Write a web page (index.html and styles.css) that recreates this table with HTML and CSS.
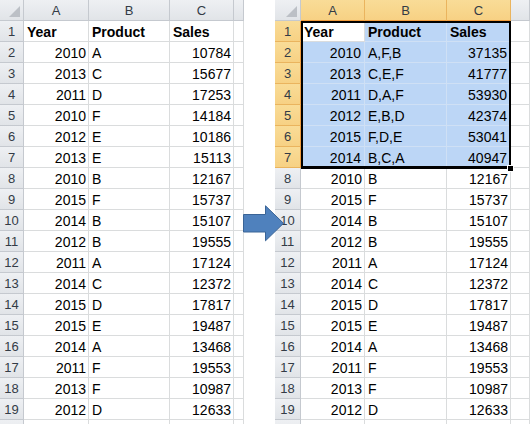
FILE: index.html
```html
<!DOCTYPE html>
<html>
<head>
<meta charset="utf-8">
<link rel="stylesheet" href="styles.css">
</head>
<body>
<div class="page">
  <div class="sheet sheet-left">
    <div class="hd corner"><span class="tri"></span></div><div class="hd col">A</div><div class="hd col">B</div><div class="hd col">C</div><div class="hd col"></div>
    <div class="hd rh">1</div><div class="c t b">Year</div><div class="c t b">Product</div><div class="c t b">Sales</div><div class="c"></div>
    <div class="hd rh">2</div><div class="c n">2010</div><div class="c t">A</div><div class="c n">10784</div><div class="c"></div>
    <div class="hd rh">3</div><div class="c n">2013</div><div class="c t">C</div><div class="c n">15677</div><div class="c"></div>
    <div class="hd rh">4</div><div class="c n">2011</div><div class="c t">D</div><div class="c n">17253</div><div class="c"></div>
    <div class="hd rh">5</div><div class="c n">2010</div><div class="c t">F</div><div class="c n">14184</div><div class="c"></div>
    <div class="hd rh">6</div><div class="c n">2012</div><div class="c t">E</div><div class="c n">10186</div><div class="c"></div>
    <div class="hd rh">7</div><div class="c n">2013</div><div class="c t">E</div><div class="c n">15113</div><div class="c"></div>
    <div class="hd rh">8</div><div class="c n">2010</div><div class="c t">B</div><div class="c n">12167</div><div class="c"></div>
    <div class="hd rh">9</div><div class="c n">2015</div><div class="c t">F</div><div class="c n">15737</div><div class="c"></div>
    <div class="hd rh">10</div><div class="c n">2014</div><div class="c t">B</div><div class="c n">15107</div><div class="c"></div>
    <div class="hd rh">11</div><div class="c n">2012</div><div class="c t">B</div><div class="c n">19555</div><div class="c"></div>
    <div class="hd rh">12</div><div class="c n">2011</div><div class="c t">A</div><div class="c n">17124</div><div class="c"></div>
    <div class="hd rh">13</div><div class="c n">2014</div><div class="c t">C</div><div class="c n">12372</div><div class="c"></div>
    <div class="hd rh">14</div><div class="c n">2015</div><div class="c t">D</div><div class="c n">17817</div><div class="c"></div>
    <div class="hd rh">15</div><div class="c n">2015</div><div class="c t">E</div><div class="c n">19487</div><div class="c"></div>
    <div class="hd rh">16</div><div class="c n">2014</div><div class="c t">A</div><div class="c n">13468</div><div class="c"></div>
    <div class="hd rh">17</div><div class="c n">2011</div><div class="c t">F</div><div class="c n">19553</div><div class="c"></div>
    <div class="hd rh">18</div><div class="c n">2013</div><div class="c t">F</div><div class="c n">10987</div><div class="c"></div>
    <div class="hd rh">19</div><div class="c n">2012</div><div class="c t">D</div><div class="c n">12633</div><div class="c"></div>
    <div class="hd rh"></div><div class="c"></div><div class="c"></div><div class="c"></div><div class="c"></div>
  </div>

  <div class="sheet sheet-right">
    <div class="hd corner"><span class="tri"></span></div><div class="hd col sel">A</div><div class="hd col sel">B</div><div class="hd col sel">C</div><div class="hd col"></div>
    <div class="hd rh sel">1</div><div class="c t b">Year</div><div class="c t b s">Product</div><div class="c t b s">Sales</div><div class="c"></div>
    <div class="hd rh sel">2</div><div class="c n s">2010</div><div class="c t s">A,F,B</div><div class="c n s">37135</div><div class="c"></div>
    <div class="hd rh sel">3</div><div class="c n s">2013</div><div class="c t s">C,E,F</div><div class="c n s">41777</div><div class="c"></div>
    <div class="hd rh sel">4</div><div class="c n s">2011</div><div class="c t s">D,A,F</div><div class="c n s">53930</div><div class="c"></div>
    <div class="hd rh sel">5</div><div class="c n s">2012</div><div class="c t s">E,B,D</div><div class="c n s">42374</div><div class="c"></div>
    <div class="hd rh sel">6</div><div class="c n s">2015</div><div class="c t s">F,D,E</div><div class="c n s">53041</div><div class="c"></div>
    <div class="hd rh sel">7</div><div class="c n s">2014</div><div class="c t s">B,C,A</div><div class="c n s">40947</div><div class="c"></div>
    <div class="hd rh">8</div><div class="c n">2010</div><div class="c t">B</div><div class="c n">12167</div><div class="c"></div>
    <div class="hd rh">9</div><div class="c n">2015</div><div class="c t">F</div><div class="c n">15737</div><div class="c"></div>
    <div class="hd rh">10</div><div class="c n">2014</div><div class="c t">B</div><div class="c n">15107</div><div class="c"></div>
    <div class="hd rh">11</div><div class="c n">2012</div><div class="c t">B</div><div class="c n">19555</div><div class="c"></div>
    <div class="hd rh">12</div><div class="c n">2011</div><div class="c t">A</div><div class="c n">17124</div><div class="c"></div>
    <div class="hd rh">13</div><div class="c n">2014</div><div class="c t">C</div><div class="c n">12372</div><div class="c"></div>
    <div class="hd rh">14</div><div class="c n">2015</div><div class="c t">D</div><div class="c n">17817</div><div class="c"></div>
    <div class="hd rh">15</div><div class="c n">2015</div><div class="c t">E</div><div class="c n">19487</div><div class="c"></div>
    <div class="hd rh">16</div><div class="c n">2014</div><div class="c t">A</div><div class="c n">13468</div><div class="c"></div>
    <div class="hd rh">17</div><div class="c n">2011</div><div class="c t">F</div><div class="c n">19553</div><div class="c"></div>
    <div class="hd rh">18</div><div class="c n">2013</div><div class="c t">F</div><div class="c n">10987</div><div class="c"></div>
    <div class="hd rh">19</div><div class="c n">2012</div><div class="c t">D</div><div class="c n">12633</div><div class="c"></div>
    <div class="hd rh"></div><div class="c"></div><div class="c"></div><div class="c"></div><div class="c"></div>
    <div class="selbox"><span class="handle"></span></div>
  </div>

  <svg class="arrow" width="42" height="37" viewBox="0 0 42 37">
    <polygon points="0.5,9.5 22.5,9.5 22.5,0.8 40.5,18.3 22.5,35.8 22.5,27 0.5,27" fill="#4f81bd" stroke="#3a6496" stroke-width="1"/>
  </svg>
</div>
</body>
</html>
```

FILE: styles.css
```css
html, body {
  margin: 0;
  padding: 0;
  background: #ffffff;
}
.page {
  position: relative;
  display: flex;
  gap: 31px;
  width: 530px;
  height: 424px;
  overflow: hidden;
  font-family: "Liberation Sans", Arial, sans-serif;
  font-size: 14px;
  color: #000;
}
.sheet {
  position: relative;
  display: grid;
  grid-auto-rows: 21px;
  height: 424px;
  overflow: hidden;
}
.sheet-left {
  grid-template-columns: 24px 65px 81px 64px 10px;
}
.sheet-right {
  grid-template-columns: 26px 64px 82px 64px 19px;
}
.hd {
  box-sizing: border-box;
  background: linear-gradient(#eef0f3, #e1e4e8);
  border-right: 1px solid #c5c9cf;
  border-bottom: 1px solid #c5c9cf;
  color: #333b46;
  font-size: 13px;
  text-align: center;
  line-height: 20px;
  padding-top: 1px;
}
.corner {
  position: relative;
}
.tri {
  position: absolute;
  right: 3px;
  bottom: 3px;
  width: 0;
  height: 0;
  border-left: 11px solid transparent;
  border-bottom: 11px solid #bcc0c6;
}
.hd.sel {
  background: linear-gradient(#f9dc97, #f7d184);
  border-right-color: #eab45e;
  border-bottom-color: #eab45e;
}
.hd.col.sel {
  border-bottom-color: #f29b3a;
}
.hd.rh.sel {
  border-right-color: #f29b3a;
}
.c {
  box-sizing: border-box;
  border-right: 1px solid #dadcdd;
  border-bottom: 1px solid #dadcdd;
  line-height: 17px;
  padding-top: 3px;
  white-space: nowrap;
  overflow: visible;
}
.c.t {
  padding-left: 3px;
  text-align: left;
}
.c.n {
  padding-right: 2px;
  text-align: right;
}
.c.n.s {
  padding-right: 3px;
}
.c.b {
  font-weight: bold;
}
.c.s {
  background: #bcd6f6;
  border-right-color: #cfe0f5;
  border-bottom-color: #cfe0f5;
}
.selbox {
  position: absolute;
  left: 26px;
  top: 21px;
  width: 210px;
  height: 148px;
  box-sizing: border-box;
  border: 2px solid #000;
  border-bottom-width: 3px;
}
.handle {
  position: absolute;
  right: -5px;
  bottom: -6px;
  width: 5px;
  height: 5px;
  background: #000;
  border: 1px solid #fff;
}
.arrow {
  position: absolute;
  left: 243px;
  top: 205px;
}
```
